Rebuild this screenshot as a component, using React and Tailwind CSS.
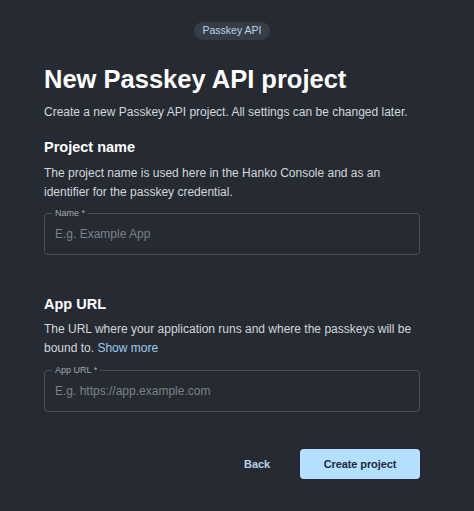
import React from 'react';

const Field = ({ label, placeholder }) => (
  <fieldset className="rounded border border-[#4a5059] px-[10px] pb-[9px] pt-0">
    <legend className="px-[3px] ml-[-3px] text-[9px] leading-[12px] text-[#a3a9b1]">{label}</legend>
    <input
      className="mt-[4px] h-[22px] w-full bg-transparent text-[12px] text-[#e6e9ed] placeholder:text-[#7b8189] outline-none"
      placeholder={placeholder}
    />
  </fieldset>
);

const App = () => {
  return (
    <div
      className="min-h-[511px] w-full bg-[#262b33] text-[#e4e7eb]"
      style={{ fontFamily: '"Liberation Sans", Arial, sans-serif' }}
    >
      <div className="pl-[44px] pr-[54px] pt-[22px]">
        <div className="flex justify-center">
          <span className="rounded-full bg-[#373d47] px-[9px] h-[18px] flex items-center text-[10.5px] font-medium text-[#b7d3ea]">
            Passkey API
          </span>
        </div>

        <h1 className="mt-[22px] text-[25.5px] leading-[34px] font-bold text-white">New Passkey API project</h1>
        <p className="mt-[6px] text-[12px] leading-[20px] text-[#d3d7dc]">
          Create a new Passkey API project. All settings can be changed later.
        </p>

        <h2 className="mt-[15px] text-[14.5px] leading-[20px] font-bold text-white">Project name</h2>
        <p className="mt-[7px] text-[12px] leading-[19px] text-[#d3d7dc]">
          The project name is used here in the Hanko Console and as an identifier for the passkey credential.
        </p>
        <div className="mt-[5px]">
          <Field label="Name *" placeholder="E.g. Example App" />
        </div>

        <h2 className="mt-[39px] text-[14.5px] leading-[20px] font-bold text-white">App URL</h2>
        <p className="mt-[6px] text-[12px] leading-[19px] text-[#d3d7dc]">
          The URL where your application runs and where the passkeys will be bound to.{' '}
          <a className="text-[#9fcbeb]">Show more</a>
        </p>
        <div className="mt-[6px]">
          <Field label="App URL *" placeholder="E.g. https://app.example.com" />
        </div>

        <div className="mt-[37px] flex items-center justify-end gap-[18px]">
          <button className="h-[30px] px-[12px] text-[11px] font-semibold tracking-[-0.1px] text-[#b7d3ea]">Back</button>
          <button className="h-[30px] w-[120px] rounded-[4px] bg-[#b3e0ff] text-[11px] font-semibold tracking-[-0.1px] text-[#1d2a3a]">
            Create project
          </button>
        </div>
      </div>
    </div>
  );
};

export default App;
